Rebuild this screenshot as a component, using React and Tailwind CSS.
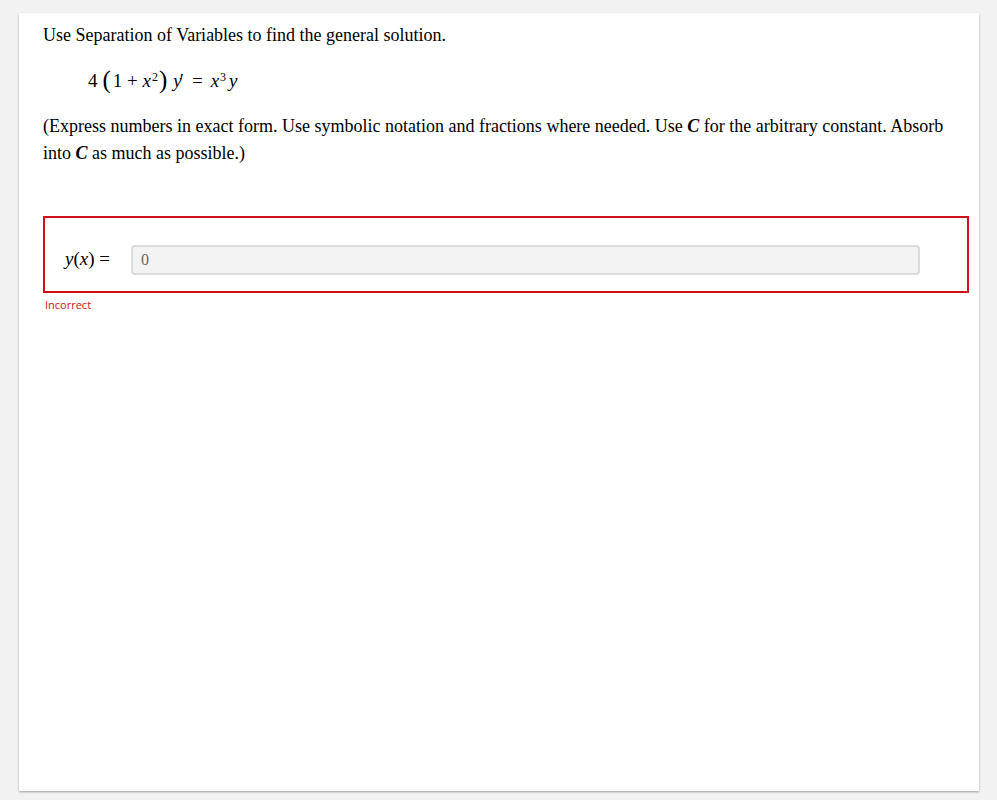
export default function App() {
  const serif = { fontFamily: '"Liberation Serif", "Times New Roman", serif' };
  return (
    <div className="min-h-[800px] bg-[#f2f2f2] pt-[13px] pl-[19px] pr-[18px] pb-[8px]">
      <div className="bg-white h-[778px] shadow-[0_1px_2px_rgba(0,0,0,0.35)] pt-[9px] pl-[24px] pr-[10px] text-[#000]" style={serif}>
        <p className="text-[18px] leading-[27px]">Use Separation of Variables to find the general solution.</p>
        <div className="mt-[19px] ml-[45px] text-[19px] leading-[24px] whitespace-nowrap">
          <span>4</span>
          <span className="inline-block text-[25px] leading-[24px] ml-[5px] mr-[2px] align-[-1px]">(</span>
          <span>1 + </span>
          <i>x</i>
          <sup className="text-[12px] ml-[1px]">2</sup>
          <span className="inline-block text-[25px] leading-[24px] ml-[1px] mr-[6px] align-[-1px]">)</span>
          <i>y</i>
          <span className="-ml-[2px]">′</span>
          <span className="mx-[8px]">=</span>
          <i>x</i>
          <sup className="text-[12px] ml-[1px]">3</sup>
          <i className="ml-[3px]">y</i>
        </div>
        <p className="mt-[20px] text-[18px] leading-[27px]">
          (Express numbers in exact form. Use symbolic notation and fractions where needed. Use <i className="font-bold">C</i> for the arbitrary constant. Absorb into <i className="font-bold">C</i> as much as possible.)
        </p>
        <div className="mt-[49px] border-2 border-[#d0111b] h-[77px] flex items-center pl-[20px] pt-[10px]">
          <span className="text-[19px] w-[66px] whitespace-nowrap"><i>y</i>(<i>x</i>) =</span>
          <div className="w-[789px] h-[30px] bg-[#f3f3f3] border-2 border-[#dcdcdc] rounded-[4px] flex items-center pl-[8px] text-[16px] text-[#666]">0</div>
        </div>
        <div className="mt-[4px] ml-[2px] text-[11px] text-[#d0111b]" style={{ fontFamily: '"Open Sans", "Noto Sans", sans-serif' }}>Incorrect</div>
      </div>
    </div>
  );
}
